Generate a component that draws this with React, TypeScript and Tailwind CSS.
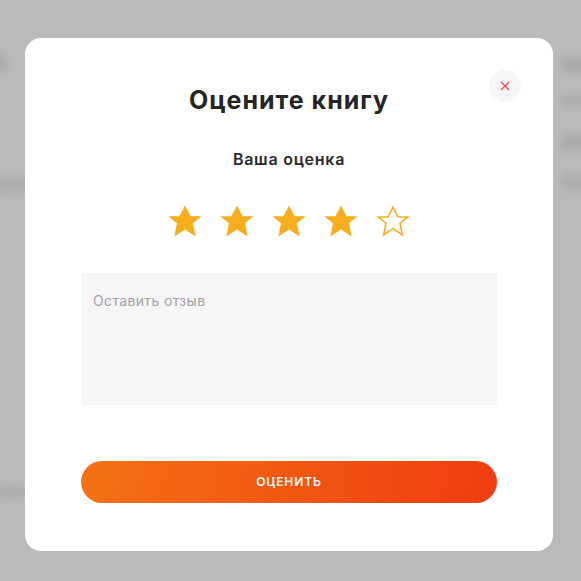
const STAR = '17,0.5 22.7,11.2 33.7,11.2 25,18.2 27.7,31.5 17,24.5 6.3,31.5 9,18.2 0.3,11.2 11.3,11.2';
const STAR_OUTLINE = '17,2.2 22,12 31.7,12 24,18.2 26.4,29.9 17,23.7 7.6,29.9 10,18.2 2.3,12 12,12';

function Star({ filled }: { filled: boolean }) {
  return (
    <svg width="34" height="32" viewBox="0 0 34 32" className="block">
      {filled ? (
        <polygon points={STAR} fill="#f6ae1e" />
      ) : (
        <polygon points={STAR_OUTLINE} fill="none" stroke="#f6ae1e" strokeWidth="1.6" />
      )}
    </svg>
  );
}

export default function App() {
  return (
    <div className="relative w-[581px] h-[581px] overflow-hidden bg-[#bababa] pl-[25px] pt-[38px] font-['Inter','Liberation_Sans',sans-serif]">
      {/* blurred page behind the modal */}
      <div className="absolute inset-0 flex justify-between">
        <div className="flex w-[25px] flex-col">
          <div className="mt-[55px] ml-[-12px] h-4 w-5 rounded-full bg-[#a8a8a8] blur-[5px]" />
          <div className="mt-[107px] ml-[-10px] h-[14px] w-10 rounded-full bg-[#aaaaaa] blur-[5px]" />
          <div className="mt-[294px] ml-[-10px] h-3 w-10 rounded-full bg-[#acacac] blur-[5px]" />
        </div>
        <div className="flex w-[21px] flex-col">
          <div className="mt-[58px] h-[14px] w-10 rounded-full bg-[#a8a8a8] blur-[5px]" />
          <div className="mt-[23px] h-3 w-10 rounded-full bg-[#adadad] blur-[5px]" />
          <div className="mt-[28px] h-[14px] w-10 rounded-full bg-[#a8a8a8] blur-[5px]" />
          <div className="mt-[26px] h-[14px] w-10 rounded-full bg-[#aaaaaa] blur-[5px]" />
        </div>
      </div>

      <div className="relative w-[528px] h-[513px] rounded-2xl bg-white px-[56px] pt-[47px]">
        <button className="absolute right-[32px] top-[32px] flex h-8 w-8 items-center justify-center rounded-full bg-[#f6f6f9]">
          <svg width="10" height="10" viewBox="0 0 10 10">
            <path d="M1 1 L9 9 M9 1 L1 9" stroke="#f2404f" strokeWidth="1.2" fill="none" />
          </svg>
        </button>

        <h2 className="text-center text-[25px] leading-[30px] font-bold tracking-[1px] text-[#252525]">Оцените книгу</h2>
        <p className="mt-[34px] text-center text-base leading-5 font-semibold tracking-[0.75px] text-[#2a2a2a]">Ваша оценка</p>

        <div className="mt-[36px] flex justify-center gap-[18px]">
          <Star filled />
          <Star filled />
          <Star filled />
          <Star filled />
          <Star filled={false} />
        </div>

        <textarea
          placeholder="Оставить отзыв"
          className="mt-[36px] block h-[132px] w-full resize-none bg-[#f6f6f9] px-3 py-[19px] text-sm leading-[18px] tracking-[0.35px] outline-none placeholder:text-[#a3a3a3]"
        />

        <button className="mt-[56px] block h-[42px] w-full rounded-full bg-[linear-gradient(100deg,#f37215,#f03c0d)] text-xs font-semibold tracking-[0.9px] text-white">
          ОЦЕНИТЬ
        </button>
      </div>
    </div>
  );
}
